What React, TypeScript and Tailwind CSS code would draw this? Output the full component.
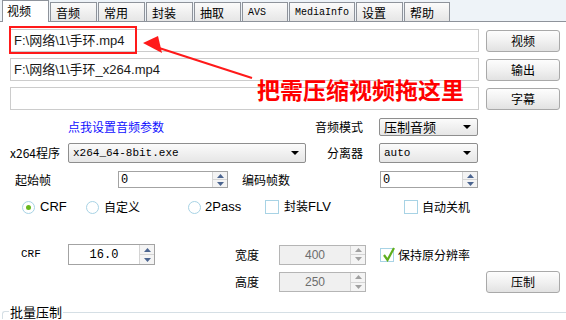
import React from "react";

const CJK = '"Noto Sans CJK SC", sans-serif';
const SANS = '"Liberation Sans", "Noto Sans CJK SC", sans-serif';
const MONO = '"Liberation Mono", "Noto Sans CJK SC", monospace';

function Btn({ label }: { label: string }) {
  return (
    <div className="w-[74px] h-[22px] rounded-[3px] border border-[#a9a9a9] bg-linear-to-b from-[#fdfdfd] via-[#f1f1f1] to-[#e2e2e2] flex items-center justify-center text-[12px] text-black shrink-0">
      {label}
    </div>
  );
}

function Tri({ up, color = "#4c6590" }: { up?: boolean; color?: string }) {
  return (
    <svg width="7" height="4" viewBox="0 0 7 4">
      {up ? <polygon points="0,4 7,4 3.5,0" fill={color} /> : <polygon points="0,0 7,0 3.5,4" fill={color} />}
    </svg>
  );
}

function Spin({
  className,
  value,
  disabled,
  center,
  mono,
}: {
  className: string;
  value: string;
  disabled?: boolean;
  center?: boolean;
  mono?: boolean;
}) {
  return (
    <div
      className={`${className} flex border ${
        disabled ? "border-[#b5b5b5] bg-[#f0f0f0]" : "border-[#a3a3a3] bg-white"
      } shrink-0`}
    >
      <div
        className={`flex-1 flex items-center text-[12px] ${center ? "justify-center" : "pl-[2px]"} ${
          disabled ? "text-[#6d6d6d]" : "text-black"
        }`}
        style={{ fontFamily: mono ? MONO : SANS }}
      >
        {value}
      </div>
      <div className="w-[15px] flex flex-col border-l border-[#d4d4d4] bg-[#f4f4f4]">
        <div className="flex-1 flex items-center justify-center border-b border-[#d4d4d4]">
          <Tri up color={disabled ? "#a0a0a0" : "#4c6590"} />
        </div>
        <div className="flex-1 flex items-center justify-center">
          <Tri color={disabled ? "#a0a0a0" : "#4c6590"} />
        </div>
      </div>
    </div>
  );
}

function Sel({ className, value, mono }: { className: string; value: string; mono?: boolean }) {
  return (
    <div
      className={`${className} shrink-0 rounded-[2px] border border-[#8e8e8e] bg-linear-to-b from-[#fbfbfb] to-[#e6e6e6] flex items-center pl-[4px] pr-[6px]`}
    >
      <span
        className="flex-1 text-black"
        style={{ fontFamily: mono ? MONO : CJK, fontSize: mono ? "11px" : "13px" }}
      >
        {value}
      </span>
      <svg width="8" height="4" viewBox="0 0 8 4">
        <polygon points="0,0 8,0 4,4" fill="#000" />
      </svg>
    </div>
  );
}

function Radio({ checked }: { checked?: boolean }) {
  return (
    <div className="w-[13px] h-[13px] rounded-full border border-[#a8d3e5] bg-white flex items-center justify-center shrink-0">
      {checked && <div className="w-[5px] h-[5px] rounded-full bg-[#69b81f]" />}
    </div>
  );
}

function Check({ checked }: { checked?: boolean }) {
  return (
    <div className="w-[14px] h-[14px] border border-[#a8d3e5] bg-white relative shrink-0">
      {checked && (
        <svg className="absolute left-[1px] top-[-2px]" width="14" height="15" viewBox="0 0 14 15">
          <path d="M2 8 L5.5 13 L12 1" stroke="#5fae1c" strokeWidth="2.2" fill="none" />
        </svg>
      )}
    </div>
  );
}

function Input({ value }: { value?: string }) {
  return (
    <div
      className="ml-[10px] w-[469px] h-[23px] border border-[#cccccc] bg-white flex items-center pl-[3px] text-[13px] text-[#1a1a1a] shrink-0"
      style={{ fontFamily: SANS }}
    >
      {value}
    </div>
  );
}

const tabs = [
  { l: "音频", w: "w-[47px]" },
  { l: "常用", w: "w-[47px]" },
  { l: "封装", w: "w-[47px]" },
  { l: "抽取", w: "w-[47px]" },
  { l: "AVS", w: "w-[46px]", mono: true },
  { l: "MediaInfo", w: "w-[66px]", mono: true },
  { l: "设置", w: "w-[47px]" },
  { l: "帮助", w: "w-[46px]" },
];

export default function App() {
  return (
    <div
      className="w-[566px] h-[320px] bg-white relative overflow-hidden text-black text-[12px]"
      style={{ fontFamily: CJK }}
    >
      {/* tab strip */}
      <div className="h-[22px] bg-[#eef3f8] flex items-end pl-[2px] border-b border-[#8e939b]">
        <div className="w-[47px] h-[22px] -mb-px bg-white border border-b-0 border-[#8e939b] pl-[4px] pt-[2px] text-[12px] leading-[16px] relative z-10">
          视频
        </div>
        {tabs.map((t) => (
          <div
            key={t.l}
            className={`${t.w} h-[19px] ml-[1px] border border-b-0 border-[#8e939b] bg-linear-to-b from-[#fbfbfb] to-[#e6e6e6] pl-[5px] pt-[3px] leading-[14px] shrink-0`}
            style={t.mono ? { fontFamily: MONO, fontSize: "10px" } : { fontSize: "12px" }}
          >
            {t.l}
          </div>
        ))}
      </div>

      {/* rows */}
      <div className="flex flex-col">
        <div className="mt-[7px] flex items-center">
          <Input value="F:\网络\1\手环.mp4" />
          <div className="ml-[7px]">
            <Btn label="视频" />
          </div>
        </div>
        <div className="mt-[6px] flex items-center">
          <Input value="F:\网络\1\手环_x264.mp4" />
          <div className="ml-[7px]">
            <Btn label="输出" />
          </div>
        </div>
        <div className="mt-[6px] flex items-center">
          <Input />
          <div className="ml-[7px]">
            <Btn label="字幕" />
          </div>
        </div>

        <div className="mt-[8px] h-[18px] flex items-center">
          <span className="ml-[68px] w-[235px] text-[12px] text-[#1010ff]">点我设置音频参数</span>
          <span className="w-[60px] text-right text-[12px]">音频模式</span>
          <Sel className="ml-[16px] w-[99px] h-[18px]" value="压制音频" />
        </div>

        <div className="mt-[7px] h-[20px] flex items-center">
          <span className="ml-[10px] w-[58px] text-[12px]">x264程序</span>
          <Sel className="w-[238px] h-[20px]" value="x264_64-8bit.exe" mono />
          <span className="w-[57px] text-right text-[12px]">分离器</span>
          <Sel className="ml-[16px] w-[99px] h-[20px]" value="auto" mono />
        </div>

        <div className="mt-[8px] h-[17px] flex items-center">
          <span className="ml-[15px] w-[103px] text-[12px]">起始帧</span>
          <Spin className="w-[110px] h-[17px]" value="0" mono />
          <span className="ml-[14px] w-[138px] text-[12px]">编码帧数</span>
          <Spin className="w-[98px] h-[17px]" value="0" mono />
        </div>

        <div className="mt-[12px] h-[14px] flex items-center text-[12px]">
          <div className="ml-[22px] w-[64px] flex items-center gap-[5px]">
            <Radio checked />
            <span style={{ fontFamily: SANS, fontSize: "13px" }}>CRF</span>
          </div>
          <div className="w-[102px] flex items-center gap-[5px]">
            <Radio />
            <span>自定义</span>
          </div>
          <div className="w-[77px] flex items-center gap-[4px]">
            <Radio />
            <span style={{ fontFamily: SANS, fontSize: "13px" }}>2Pass</span>
          </div>
          <div className="w-[139px] flex items-center gap-[5px]">
            <Check />
            <span>
              封装<span style={{ fontFamily: SANS, fontSize: "13px" }}>FLV</span>
            </span>
          </div>
          <div className="flex items-center gap-[4px]">
            <Check />
            <span>自动关机</span>
          </div>
        </div>

        <div className="mt-[30px] h-[21px] flex items-center">
          <span className="ml-[21px] w-[47px] text-[11px]" style={{ fontFamily: MONO }}>
            CRF
          </span>
          <Spin className="w-[87px] h-[21px]" value="16.0" center mono />
          <span className="ml-[80px] w-[44px] text-[12px]">宽度</span>
          <Spin className="w-[87px] h-[20px]" value="400" center disabled />
          <div className="ml-[14px] flex items-center gap-[4px]">
            <Check checked />
            <span className="text-[12px]">保持原分辨率</span>
          </div>
        </div>

        <div className="mt-[6px] h-[22px] flex items-center">
          <span className="ml-[235px] w-[44px] text-[12px]">高度</span>
          <Spin className="w-[87px] h-[20px]" value="250" center disabled />
          <div className="ml-[120px]">
            <Btn label="压制" />
          </div>
        </div>

        <div className="mt-[12px] flex items-center h-[14px]">
          <div className="ml-[2px] w-[7px] h-[8px] self-end border-t border-l border-[#d5dfe5] rounded-tl-[3px]" />
          <span className="px-[1px] text-[13px] leading-[14px]">批量压制</span>
          <div className="flex-1 h-px bg-[#d5dfe5]" />
        </div>
      </div>

      {/* red annotation overlay */}
      <div className="absolute left-[9px] top-[26px] w-[128px] h-[28px] border-2 border-[#ff1a1a]" />
      <svg className="absolute left-0 top-0" width="566" height="320" viewBox="0 0 566 320">
        <line x1="156" y1="47" x2="252" y2="78" stroke="#ff1a1a" strokeWidth="2" />
        <polygon points="143,43 158,36 162,53" fill="#ff1a1a" />
      </svg>
      <div
        className="absolute left-[257px] top-[76px] text-[23px] leading-[26px] font-bold text-[#ff0000] whitespace-nowrap"
        style={{ fontFamily: CJK }}
      >
        把需压缩视频拖这里
      </div>
    </div>
  );
}
